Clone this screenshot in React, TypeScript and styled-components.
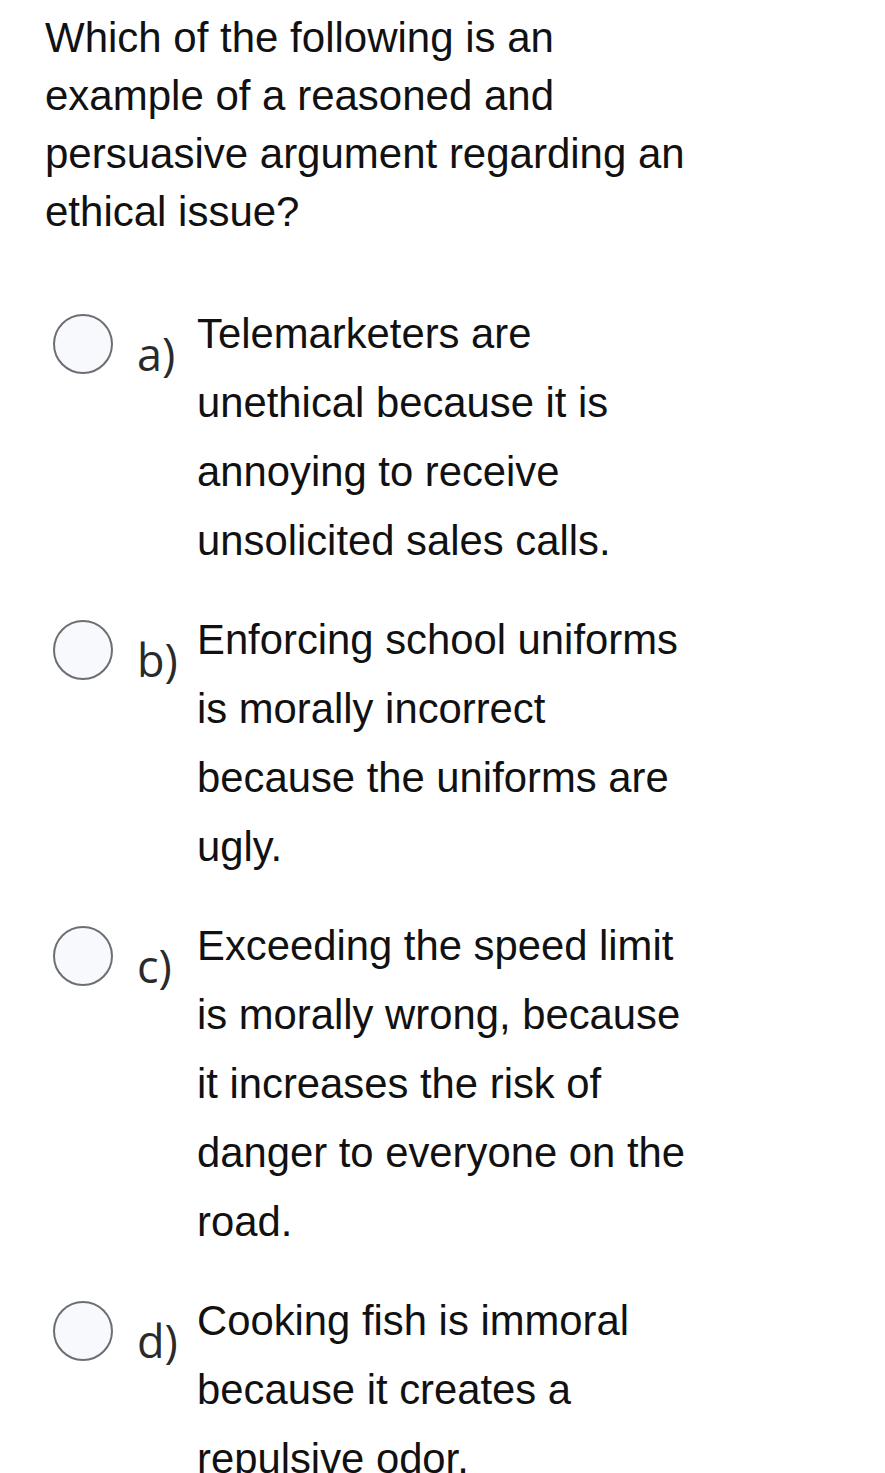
import React from "react";
import styled, { createGlobalStyle } from "styled-components";

const Global = createGlobalStyle`
  html, body {
    margin: 0;
    padding: 0;
    background: #ffffff;
  }
  body {
    font-family: "Liberation Sans", Arial, Helvetica, sans-serif;
    color: #111111;
  }
`;

const Page = styled.main`
  display: flex;
  flex-direction: column;
  padding: 9px 0 0 45px;
  width: 885px;
  box-sizing: border-box;
`;

const Question = styled.p`
  margin: 0;
  width: 665px;
  font-size: 42px;
  line-height: 58px;
  color: #111111;
`;

const Options = styled.div`
  display: flex;
  flex-direction: column;
  gap: 30px;
  margin-top: 58px;
  margin-left: 8px;
`;

const Option = styled.label`
  display: flex;
  align-items: flex-start;
  cursor: pointer;
`;

const Radio = styled.span`
  flex: none;
  width: 60px;
  height: 60px;
  box-sizing: border-box;
  border-radius: 50%;
  border: 2.5px solid #6c6f72;
  background: #f7f9fd;
  margin-top: 15px;
`;

const Letter = styled.span`
  flex: none;
  width: 60px;
  margin-left: 24px;
  margin-top: 32px;
  font-family: "Open Sans", "Noto Sans", sans-serif;
  font-size: 45px;
  line-height: 46px;
  color: #2a2a2a;
`;

const Text = styled.span`
  display: block;
  width: 500px;
  font-size: 41.8px;
  line-height: 69px;
  color: #111111;
`;

const options = [
  { key: "a)", text: "Telemarketers are unethical because it is annoying to receive unsolicited sales calls." },
  { key: "b)", text: "Enforcing school uniforms is morally incorrect because the uniforms are ugly." },
  { key: "c)", text: "Exceeding the speed limit is morally wrong, because it increases the risk of danger to everyone on the road." },
  { key: "d)", text: "Cooking fish is immoral because it creates a repulsive odor." },
];

export default function App() {
  return (
    <>
      <Global />
      <Page>
        <Question>
          Which of the following is an example of a reasoned and persuasive argument regarding an ethical issue?
        </Question>
        <Options>
          {options.map((o) => (
            <Option key={o.key}>
              <Radio />
              <Letter>{o.key}</Letter>
              <Text>{o.text}</Text>
            </Option>
          ))}
        </Options>
      </Page>
    </>
  );
}
